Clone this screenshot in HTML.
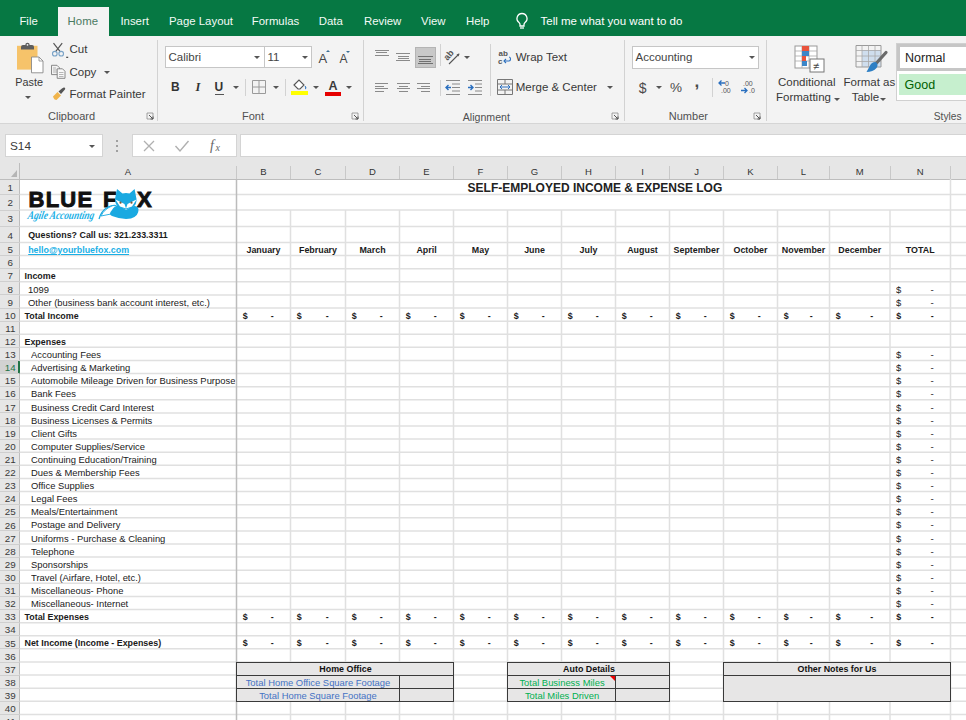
<!DOCTYPE html><html><head><meta charset="utf-8"><style>
*{margin:0;padding:0;box-sizing:border-box}
html,body{width:966px;height:720px;overflow:hidden;background:#fff;font-family:"Liberation Sans",sans-serif}
.t{position:absolute;white-space:nowrap;line-height:1}
.a{position:absolute}
</style></head><body>
<div class="a" style="left:0;top:0;width:966px;height:36px;background:#067843"></div>
<div class="a" style="left:58px;top:7px;width:51px;height:29px;background:#f3f3f3"></div>
<div class="t" style="left:19.40px;top:16.35px;font-size:11.4px;color:#f4fbf6;">File</div>
<div class="t" style="left:67.60px;top:16.35px;font-size:11.4px;color:#4a7a62;">Home</div>
<div class="t" style="left:120.40px;top:16.35px;font-size:11.4px;color:#f4fbf6;">Insert</div>
<div class="t" style="left:169.00px;top:16.35px;font-size:11.4px;color:#f4fbf6;">Page Layout</div>
<div class="t" style="left:251.80px;top:16.35px;font-size:11.4px;color:#f4fbf6;">Formulas</div>
<div class="t" style="left:318.70px;top:16.35px;font-size:11.4px;color:#f4fbf6;">Data</div>
<div class="t" style="left:364.00px;top:16.35px;font-size:11.4px;color:#f4fbf6;">Review</div>
<div class="t" style="left:421.00px;top:16.35px;font-size:11.4px;color:#f4fbf6;">View</div>
<div class="t" style="left:466.00px;top:16.35px;font-size:11.4px;color:#f4fbf6;">Help</div>
<div class="t" style="left:540.50px;top:15.77px;font-size:11.5px;color:#fff;">Tell me what you want to do</div>
<svg class="a" style="left:514px;top:12px" width="16" height="18" viewBox="0 0 16 18"><path d="M8 1.5a5 5 0 0 0-3 9c.6.5 1 1.2 1 2v1.5h4V12.5c0-.8.4-1.5 1-2a5 5 0 0 0-3-9z" fill="none" stroke="#fff" stroke-width="1.3"/><path d="M6 16h4" stroke="#fff" stroke-width="1.3"/></svg>
<div class="a" style="left:0;top:36px;width:966px;height:88px;background:#f3f3f3;border-bottom:1px solid #d5d5d5"></div>
<div class="a" style="left:0;top:124px;width:966px;height:55px;background:#e6e6e6"></div>
<div class="a" style="left:157px;top:40px;width:1px;height:81px;background:#d2d2d2"></div>
<div class="a" style="left:363px;top:40px;width:1px;height:81px;background:#d2d2d2"></div>
<div class="a" style="left:624px;top:40px;width:1px;height:81px;background:#d2d2d2"></div>
<div class="a" style="left:766px;top:40px;width:1px;height:81px;background:#d2d2d2"></div>
<div class="t" style="left:48.00px;top:111.19px;font-size:11px;color:#505050;">Clipboard</div>
<div class="t" style="left:242.00px;top:111.19px;font-size:11px;color:#505050;">Font</div>
<div class="t" style="left:462.80px;top:111.53px;font-size:10.6px;color:#505050;">Alignment</div>
<div class="t" style="left:668.80px;top:111.19px;font-size:11px;color:#505050;">Number</div>
<div class="t" style="left:933.80px;top:111.87px;font-size:10.2px;color:#505050;">Styles</div>
<svg class="a" style="left:146px;top:112px" width="9" height="9" viewBox="0 0 9 9"><path d="M1 1h6v6H1z" fill="none" stroke="#8a8a8a" stroke-width="0.8"/><path d="M3 3l4 4M4.5 7H7V4.5" fill="none" stroke="#555" stroke-width="1"/></svg>
<svg class="a" style="left:351px;top:112px" width="9" height="9" viewBox="0 0 9 9"><path d="M1 1h6v6H1z" fill="none" stroke="#8a8a8a" stroke-width="0.8"/><path d="M3 3l4 4M4.5 7H7V4.5" fill="none" stroke="#555" stroke-width="1"/></svg>
<svg class="a" style="left:611px;top:112px" width="9" height="9" viewBox="0 0 9 9"><path d="M1 1h6v6H1z" fill="none" stroke="#8a8a8a" stroke-width="0.8"/><path d="M3 3l4 4M4.5 7H7V4.5" fill="none" stroke="#555" stroke-width="1"/></svg>
<svg class="a" style="left:753px;top:112px" width="9" height="9" viewBox="0 0 9 9"><path d="M1 1h6v6H1z" fill="none" stroke="#8a8a8a" stroke-width="0.8"/><path d="M3 3l4 4M4.5 7H7V4.5" fill="none" stroke="#555" stroke-width="1"/></svg>
<svg class="a" style="left:0;top:36px" width="160" height="70" viewBox="0 36 160 70">
<rect x="17" y="45.8" width="20.5" height="23.8" fill="#f6c36a"/>
<path d="M21 49.5v-2.5q0-2 2-2h2.3a2.2 2.2 0 0 1 4.4 0H32q2 0 2 2v2.5z" fill="#5e5e5e"/>
<circle cx="27.5" cy="44.8" r="0.9" fill="#f3f3f3"/>
<path d="M31.5 57h7.5l4 4v11.8H31.5z" fill="#fff" stroke="#8a8a8a" stroke-width="0.9"/>
<path d="M39 57v4h4" fill="none" stroke="#8a8a8a" stroke-width="0.8"/>
<path d="M53.5 43.2L60.2 51.6M62.2 43.2L55.6 51.6" stroke="#555" stroke-width="1.2" fill="none"/>
<circle cx="54.8" cy="53.7" r="2.3" fill="none" stroke="#7aa3c7" stroke-width="1.1"/>
<circle cx="61.2" cy="53.7" r="2.3" fill="none" stroke="#7aa3c7" stroke-width="1.1"/>
<path d="M66.2 57.3h2" stroke="#333" stroke-width="1.1"/>
<path d="M51.5 65.3h5.5l2.5 2.5v6.8h-8z" fill="#f3f3f3" stroke="#7d7d7d" stroke-width="0.9"/>
<path d="M53 68h3M53 70h4M53 72h4" stroke="#9a9a9a" stroke-width="0.7"/>
<path d="M57.2 68.8h5.3l2.5 2.5v7h-7.8z" fill="#f8f8f8" stroke="#7d7d7d" stroke-width="0.9"/>
<path d="M59 72.5h4.5M59 74.5h4.5M59 76.5h4.5" stroke="#9a9a9a" stroke-width="0.7"/>
<path d="M53 96.5l4.5-4.5 3.5 3.5-4.5 4.5q-2.5 0-3.5-3.5z" fill="#f0b44c"/>
<path d="M58.5 91.5l4-3.5 2 2-3.5 4z" fill="#555"/><circle cx="64" cy="88.8" r="1.2" fill="#555"/>
</svg>
<div class="t" style="left:15.30px;top:77.16px;font-size:10.8px;color:#383838;">Paste</div>
<div class="a" style="left:25px;top:96px;width:0;height:0;border-left:3px solid transparent;border-right:3px solid transparent;border-top:3px solid #555"></div>
<div class="t" style="left:69.50px;top:44.27px;font-size:11.5px;color:#383838;">Cut</div>
<div class="t" style="left:69.50px;top:67.27px;font-size:11.5px;color:#383838;">Copy</div>
<div class="a" style="left:104px;top:71px;width:0;height:0;border-left:3px solid transparent;border-right:3px solid transparent;border-top:3px solid #555"></div>
<div class="t" style="left:69.50px;top:88.77px;font-size:11.5px;color:#383838;">Format Painter</div>
<div class="a" style="left:165px;top:46px;width:100px;height:22px;background:#fff;border:1px solid #c6c6c6"></div>
<div class="a" style="left:264px;top:46px;width:48px;height:22px;background:#fff;border:1px solid #c6c6c6"></div>
<div class="t" style="left:168.50px;top:51.77px;font-size:11.5px;color:#444;">Calibri</div>
<div class="t" style="left:267.50px;top:51.77px;font-size:11.5px;color:#444;">11</div>
<div class="a" style="left:253.5px;top:56px;width:0;height:0;border-left:3px solid transparent;border-right:3px solid transparent;border-top:3px solid #555"></div>
<div class="a" style="left:302px;top:56px;width:0;height:0;border-left:3px solid transparent;border-right:3px solid transparent;border-top:3px solid #555"></div>
<div class="t" style="left:318.50px;top:52.00px;font-size:13px;color:#444;">A</div>
<div class="t" style="left:339.50px;top:52.84px;font-size:12px;color:#444;">A</div>
<div class="a" style="left:326px;top:50px;width:0;height:0;border-left:2.2px solid transparent;border-right:2.2px solid transparent;border-bottom:2.5px solid #3a6f95"></div>
<div class="a" style="left:346.3px;top:50.5px;width:0;height:0;border-left:2.2px solid transparent;border-right:2.2px solid transparent;border-top:2.5px solid #3a6f95"></div>
<div class="t" style="left:171.00px;top:81.34px;font-size:12px;color:#333;font-weight:bold;">B</div>
<div class="t" style="left:195.50px;top:80.92px;font-size:12.5px;color:#333;font-weight:bold;font-style:italic;font-family:'Liberation Serif',serif;">I</div>
<div class="t" style="left:214.50px;top:81.34px;font-size:12px;color:#333;font-weight:bold;">U</div>
<div class="a" style="left:214.5px;top:93.5px;width:9px;height:1px;background:#555"></div>
<div class="a" style="left:232.5px;top:86px;width:0;height:0;border-left:3px solid transparent;border-right:3px solid transparent;border-top:3px solid #555"></div>
<div class="a" style="left:245px;top:79px;width:1px;height:17px;background:#d2d2d2"></div>
<svg class="a" style="left:252px;top:80px" width="14" height="14" viewBox="0 0 14 14"><path d="M.5.5h13v13H.5zM7 .5v13M.5 7h13" fill="none" stroke="#9a9a9a" stroke-width="1"/></svg>
<div class="a" style="left:272.5px;top:86px;width:0;height:0;border-left:3px solid transparent;border-right:3px solid transparent;border-top:3px solid #555"></div>
<div class="a" style="left:285px;top:79px;width:1px;height:17px;background:#d2d2d2"></div>
<svg class="a" style="left:291px;top:78px" width="17" height="17" viewBox="0 0 17 17"><path d="M3 7l5-5 5 5-4 4H7z" fill="#fff" stroke="#555" stroke-width="1.1"/><path d="M14 8c1 1.5 1.5 2.5 0 3" fill="#3a7cc3" stroke="#3a7cc3"/><rect x="0" y="13" width="17" height="4" fill="#ffff00"/></svg>
<div class="a" style="left:313px;top:86px;width:0;height:0;border-left:3px solid transparent;border-right:3px solid transparent;border-top:3px solid #555"></div>
<div class="t" style="left:33.00px;width:600px;text-align:center;top:79.72px;font-size:12.5px;color:#3a3a3a;font-weight:bold;">A</div>
<div class="a" style="left:325px;top:91.5px;width:16px;height:4px;background:#e60000"></div>
<div class="a" style="left:346px;top:86px;width:0;height:0;border-left:3px solid transparent;border-right:3px solid transparent;border-top:3px solid #555"></div>
<div class="a" style="left:374.5px;top:49.8px;width:14px;height:1px;background:#8a8a8a"></div><div class="a" style="left:376.0px;top:52.0px;width:11px;height:1px;background:#8a8a8a"></div>
<div class="a" style="left:374.5px;top:54.8px;width:14px;height:1px;background:#8a8a8a"></div>
<div class="a" style="left:396px;top:52.8px;width:14px;height:1px;background:#8a8a8a"></div>
<div class="a" style="left:397.5px;top:55.6px;width:11px;height:1px;background:#8a8a8a"></div><div class="a" style="left:397.5px;top:57.7px;width:11px;height:1px;background:#8a8a8a"></div>
<div class="a" style="left:396px;top:59.8px;width:14px;height:1px;background:#8a8a8a"></div>
<div class="a" style="left:414.5px;top:46.5px;width:21px;height:21.5px;background:#c8c8c8;border:1px solid #b4b4b4"></div>
<div class="a" style="left:417.5px;top:56.2px;width:15px;height:1px;background:#707070"></div><div class="a" style="left:419.0px;top:58.6px;width:12px;height:1px;background:#707070"></div><div class="a" style="left:419.0px;top:61.0px;width:12px;height:1px;background:#707070"></div><div class="a" style="left:417.5px;top:63.4px;width:15px;height:1px;background:#707070"></div>
<div class="a" style="left:439.5px;top:44px;width:1px;height:22px;background:#d2d2d2"></div>
<svg class="a" style="left:444px;top:49px" width="18" height="16" viewBox="0 0 18 16"><text x="0" y="0" font-size="9" font-weight="bold" fill="#555" font-family="Liberation Sans" transform="translate(3.5 12) rotate(-50)">ab</text><path d="M5 15L15 5" stroke="#555" stroke-width="1.1" fill="none"/><path d="M15.5 4.5l-1 3-2-2z" fill="#555"/></svg>
<div class="a" style="left:464px;top:56px;width:0;height:0;border-left:3px solid transparent;border-right:3px solid transparent;border-top:3px solid #555"></div>
<div class="a" style="left:375px;top:83.0px;width:13px;height:1px;background:#8a8a8a"></div><div class="a" style="left:375px;top:85.5px;width:9px;height:1px;background:#8a8a8a"></div><div class="a" style="left:375px;top:88.0px;width:13px;height:1px;background:#8a8a8a"></div><div class="a" style="left:375px;top:90.5px;width:9px;height:1px;background:#8a8a8a"></div>
<div class="a" style="left:397px;top:83.0px;width:13px;height:1px;background:#8a8a8a"></div><div class="a" style="left:399px;top:85.5px;width:9px;height:1px;background:#8a8a8a"></div><div class="a" style="left:397px;top:88.0px;width:13px;height:1px;background:#8a8a8a"></div><div class="a" style="left:399px;top:90.5px;width:9px;height:1px;background:#8a8a8a"></div>
<div class="a" style="left:417px;top:83.0px;width:13px;height:1px;background:#8a8a8a"></div><div class="a" style="left:421px;top:85.5px;width:9px;height:1px;background:#8a8a8a"></div><div class="a" style="left:417px;top:88.0px;width:13px;height:1px;background:#8a8a8a"></div><div class="a" style="left:421px;top:90.5px;width:9px;height:1px;background:#8a8a8a"></div>
<div class="a" style="left:439.5px;top:80px;width:1px;height:16px;background:#d2d2d2"></div>
<svg class="a" style="left:445px;top:80px" width="16" height="15" viewBox="0 0 16 15"><path d="M1 .5h14M7 4h8M7 7.5h8M7 11h8M1 14.5h14" stroke="#8a8a8a" stroke-width="1"/><path d="M1 7.5h5M3.5 5L1 7.5 3.5 10" stroke="#2a6fbf" stroke-width="1.4" fill="none"/></svg>
<svg class="a" style="left:467px;top:80px" width="16" height="15" viewBox="0 0 16 15"><path d="M1 .5h14M8 4h7M8 7.5h7M8 11h7M1 14.5h14" stroke="#8a8a8a" stroke-width="1"/><path d="M1 7.5h5M3.5 5L6 7.5 3.5 10" stroke="#2a6fbf" stroke-width="1.4" fill="none"/></svg>
<div class="a" style="left:490px;top:44px;width:1px;height:52px;background:#d2d2d2"></div>
<svg class="a" style="left:497px;top:49px" width="16" height="16" viewBox="0 0 16 16"><text x="1.5" y="7" font-size="8" font-weight="bold" fill="#555" font-family="Liberation Sans">ab</text><text x="1" y="14.5" font-size="8" font-weight="bold" fill="#555" font-family="Liberation Sans">c</text><path d="M7 12h5c2 0 2-4 0-4" stroke="#2a6fbf" stroke-width="1.1" fill="none"/><path d="M9 10l-2 2 2 2" stroke="#2a6fbf" stroke-width="1.1" fill="none"/></svg>
<div class="t" style="left:515.70px;top:51.77px;font-size:11.5px;color:#383838;">Wrap Text</div>
<svg class="a" style="left:497px;top:79px" width="16" height="16" viewBox="0 0 16 16"><path d="M.5.5h15v15H.5zM.5 5h15M.5 11h15M8 .5v4.5M8 11v4.5" fill="none" stroke="#777" stroke-width="1"/><path d="M3 8h10M5 6l-2 2 2 2M11 6l2 2-2 2" fill="none" stroke="#2a6fbf" stroke-width="1"/></svg>
<div class="t" style="left:515.70px;top:81.77px;font-size:11.5px;color:#383838;">Merge &amp; Center</div>
<div class="a" style="left:606.5px;top:86px;width:0;height:0;border-left:3px solid transparent;border-right:3px solid transparent;border-top:3px solid #555"></div>
<div class="a" style="left:632px;top:46px;width:127px;height:22.5px;background:#fff;border:1px solid #c6c6c6"></div>
<div class="t" style="left:635.50px;top:51.77px;font-size:11.5px;color:#444;">Accounting</div>
<div class="a" style="left:748.5px;top:56px;width:0;height:0;border-left:3px solid transparent;border-right:3px solid transparent;border-top:3px solid #555"></div>
<div class="t" style="left:638.80px;top:81.15px;font-size:14px;color:#4a4a4a;">$</div>
<div class="a" style="left:656px;top:86px;width:0;height:0;border-left:3px solid transparent;border-right:3px solid transparent;border-top:3px solid #555"></div>
<div class="t" style="left:670.00px;top:81.37px;font-size:13.5px;color:#4a4a4a;">%</div>
<div class="t" style="left:694.50px;top:73.11px;font-size:17px;color:#4a4a4a;font-weight:bold;">,</div>
<div class="a" style="left:712px;top:78px;width:1px;height:19px;background:#d2d2d2"></div>
<svg class="a" style="left:718px;top:79px" width="16" height="16" viewBox="0 0 16 16"><text x="7" y="7" font-size="7" fill="#555" font-family="Liberation Sans">0</text><text x="3" y="14" font-size="7" fill="#555" font-family="Liberation Sans">.00</text><path d="M1 4h6M3.5 1.5L1 4l2.5 2.5" stroke="#2a6fbf" stroke-width="1.3" fill="none"/></svg>
<svg class="a" style="left:740px;top:79px" width="16" height="16" viewBox="0 0 16 16"><text x="3" y="7" font-size="7" fill="#555" font-family="Liberation Sans">.00</text><text x="9" y="14" font-size="7" fill="#555" font-family="Liberation Sans">.0</text><path d="M1 11.5h6M4.5 9L7 11.5 4.5 14" stroke="#2a6fbf" stroke-width="1.3" fill="none"/></svg>
<svg class="a" style="left:794px;top:45px" width="31" height="28" viewBox="0 0 31 28">
<rect x="1" y="1" width="22" height="22" fill="#fff" stroke="#999" stroke-width="1"/>
<path d="M1 6h22M1 11h22M1 16h22M8 1v22M15 1v22" stroke="#aaa" stroke-width="0.8"/>
<rect x="8" y="1" width="7" height="5" fill="#e8533c"/><rect x="8" y="6" width="7" height="5" fill="#3b86c8"/><rect x="8" y="11" width="4" height="5" fill="#e8533c"/><rect x="8" y="16" width="5" height="5" fill="#3b86c8"/>
<rect x="16" y="14" width="14" height="13" fill="#fff" stroke="#777" stroke-width="1"/>
<text x="19" y="25" font-size="11" fill="#444" font-family="Liberation Sans">&#8800;</text>
</svg>
<div class="t" style="left:778.00px;top:76.77px;font-size:11.5px;color:#383838;">Conditional</div>
<div class="t" style="left:776.00px;top:92.27px;font-size:11.5px;color:#383838;">Formatting</div>
<div class="a" style="left:834px;top:98px;width:0;height:0;border-left:3px solid transparent;border-right:3px solid transparent;border-top:3px solid #555"></div>
<svg class="a" style="left:850px;top:40px" width="40" height="36" viewBox="850 40 40 36">
<rect x="862" y="50" width="19" height="17" fill="#cfdeee"/>
<path d="M856 45.5h25v21.5h-25z" fill="none" stroke="#9a9a9a" stroke-width="1"/>
<path d="M856 50.5h25M856 56h25M856 61.5h25M862 45.5v21.5M868.5 45.5v21.5M875 45.5v21.5" stroke="#a8a8a8" stroke-width="0.8"/>
<path d="M886 52.5L876.5 63" stroke="#6a6a6a" stroke-width="3.2" stroke-linecap="round"/>
<path d="M875.5 62c-3 0-5 2-6 4.5l-3 5.5c4 0 8-1.5 10-4 1.5-2 1.5-4.5-1-6z" fill="#2e7fc4"/>
</svg>
<div class="t" style="left:843.50px;top:76.77px;font-size:11.5px;color:#383838;">Format as</div>
<div class="t" style="left:851.70px;top:92.27px;font-size:11.5px;color:#383838;">Table</div>
<div class="a" style="left:880px;top:98px;width:0;height:0;border-left:3px solid transparent;border-right:3px solid transparent;border-top:3px solid #555"></div>
<div class="a" style="left:896px;top:43px;width:80px;height:58px;background:#fff;border:1px solid #d0d0d0"></div>
<div class="a" style="left:897px;top:44px;width:80px;height:27px;background:#fff;border:3px solid #c6c6c6"></div>
<div class="t" style="left:905.00px;top:51.92px;font-size:12.5px;color:#222;">Normal</div>
<div class="a" style="left:899px;top:73.5px;width:80px;height:21.5px;background:#c6efce"></div>
<div class="t" style="left:904.50px;top:79.42px;font-size:12.5px;color:#006100;">Good</div>
<div class="a" style="left:5px;top:134px;width:98px;height:23px;background:#fff;border:1px solid #d4d4d4"></div>
<div class="t" style="left:10.00px;top:140.61px;font-size:11.8px;color:#3a3a3a;">S14</div>
<div class="a" style="left:89px;top:145px;width:0;height:0;border-left:3px solid transparent;border-right:3px solid transparent;border-top:3px solid #555"></div>
<div class="a" style="left:116px;top:140px;width:2px;height:2px;background:#a0a0a0"></div>
<div class="a" style="left:116px;top:145px;width:2px;height:2px;background:#a0a0a0"></div>
<div class="a" style="left:116px;top:150px;width:2px;height:2px;background:#a0a0a0"></div>
<div class="a" style="left:131.5px;top:134px;width:105px;height:23px;background:#fff;border:1px solid #d4d4d4"></div>
<svg class="a" style="left:142px;top:139px" width="14" height="14" viewBox="0 0 14 14"><path d="M2 2l10 10M12 2L2 12" stroke="#b0b0b0" stroke-width="1.3"/></svg>
<svg class="a" style="left:174px;top:139px" width="16" height="14" viewBox="0 0 16 14"><path d="M1.5 7l4.5 5 8.5-10" stroke="#b0b0b0" stroke-width="1.4" fill="none"/></svg>
<div class="t" style="left:210.00px;top:139.15px;font-size:14px;color:#666;font-style:italic;font-family:'Liberation Serif',serif;">f</div>
<div class="t" style="left:215.50px;top:142.53px;font-size:10px;color:#666;font-style:italic;font-family:'Liberation Serif',serif;">x</div>
<div class="a" style="left:239.5px;top:134px;width:740px;height:23px;background:#fff;border:1px solid #d4d4d4"></div>
<div class="a" style="left:0;top:163px;width:966px;height:16px;background:#e6e6e6"></div>
<div class="a" style="left:0;top:179px;width:19.5px;height:541px;background:#e6e6e6"></div>
<div class="a" style="left:10.5px;top:169.5px;width:0;height:0;border-left:6.5px solid transparent;border-bottom:7px solid #b5b5b5"></div>
<div class="a" style="left:0;top:178.5px;width:966px;height:1px;background:#bdbdbd"></div>
<div class="a" style="left:19px;top:163px;width:1px;height:557px;background:#bdbdbd"></div>
<div class="t" style="left:-172.00px;width:600px;text-align:center;top:167.46px;font-size:9.5px;color:#333;">A</div>
<div class="a" style="left:236.0px;top:166px;width:1px;height:13px;background:#c8c8c8"></div>
<div class="t" style="left:-36.50px;width:600px;text-align:center;top:167.46px;font-size:9.5px;color:#333;">B</div>
<div class="a" style="left:290.0px;top:166px;width:1px;height:13px;background:#c8c8c8"></div>
<div class="t" style="left:18.00px;width:600px;text-align:center;top:167.46px;font-size:9.5px;color:#333;">C</div>
<div class="a" style="left:345.0px;top:166px;width:1px;height:13px;background:#c8c8c8"></div>
<div class="t" style="left:72.50px;width:600px;text-align:center;top:167.46px;font-size:9.5px;color:#333;">D</div>
<div class="a" style="left:399.0px;top:166px;width:1px;height:13px;background:#c8c8c8"></div>
<div class="t" style="left:126.50px;width:600px;text-align:center;top:167.46px;font-size:9.5px;color:#333;">E</div>
<div class="a" style="left:453.0px;top:166px;width:1px;height:13px;background:#c8c8c8"></div>
<div class="t" style="left:180.50px;width:600px;text-align:center;top:167.46px;font-size:9.5px;color:#333;">F</div>
<div class="a" style="left:507.0px;top:166px;width:1px;height:13px;background:#c8c8c8"></div>
<div class="t" style="left:234.50px;width:600px;text-align:center;top:167.46px;font-size:9.5px;color:#333;">G</div>
<div class="a" style="left:561.0px;top:166px;width:1px;height:13px;background:#c8c8c8"></div>
<div class="t" style="left:288.50px;width:600px;text-align:center;top:167.46px;font-size:9.5px;color:#333;">H</div>
<div class="a" style="left:615.0px;top:166px;width:1px;height:13px;background:#c8c8c8"></div>
<div class="t" style="left:342.50px;width:600px;text-align:center;top:167.46px;font-size:9.5px;color:#333;">I</div>
<div class="a" style="left:669.0px;top:166px;width:1px;height:13px;background:#c8c8c8"></div>
<div class="t" style="left:396.50px;width:600px;text-align:center;top:167.46px;font-size:9.5px;color:#333;">J</div>
<div class="a" style="left:723.0px;top:166px;width:1px;height:13px;background:#c8c8c8"></div>
<div class="t" style="left:450.50px;width:600px;text-align:center;top:167.46px;font-size:9.5px;color:#333;">K</div>
<div class="a" style="left:777.0px;top:166px;width:1px;height:13px;background:#c8c8c8"></div>
<div class="t" style="left:503.50px;width:600px;text-align:center;top:167.46px;font-size:9.5px;color:#333;">L</div>
<div class="a" style="left:829.0px;top:166px;width:1px;height:13px;background:#c8c8c8"></div>
<div class="t" style="left:559.75px;width:600px;text-align:center;top:167.46px;font-size:9.5px;color:#333;">M</div>
<div class="a" style="left:889.5px;top:166px;width:1px;height:13px;background:#c8c8c8"></div>
<div class="t" style="left:620.25px;width:600px;text-align:center;top:167.46px;font-size:9.5px;color:#333;">N</div>
<div class="a" style="left:950.0px;top:166px;width:1px;height:13px;background:#c8c8c8"></div>
<div class="t" style="left:-289.70px;width:600px;text-align:center;top:182.90px;font-size:9.8px;color:#3a3a3a;">1</div>
<div class="a" style="left:0;top:193.9px;width:19px;height:1px;background:#cfcfcf"></div>
<div class="t" style="left:-289.70px;width:600px;text-align:center;top:198.40px;font-size:9.8px;color:#3a3a3a;">2</div>
<div class="a" style="left:0;top:209.5px;width:19px;height:1px;background:#cfcfcf"></div>
<div class="t" style="left:-289.70px;width:600px;text-align:center;top:214.45px;font-size:9.8px;color:#3a3a3a;">3</div>
<div class="a" style="left:0;top:226.0px;width:19px;height:1px;background:#cfcfcf"></div>
<div class="t" style="left:-289.70px;width:600px;text-align:center;top:230.70px;font-size:9.8px;color:#3a3a3a;">4</div>
<div class="a" style="left:0;top:242.0px;width:19px;height:1px;background:#cfcfcf"></div>
<div class="t" style="left:-289.70px;width:600px;text-align:center;top:245.26px;font-size:9.8px;color:#3a3a3a;">5</div>
<div class="a" style="left:0;top:255.1px;width:19px;height:1px;background:#cfcfcf"></div>
<div class="t" style="left:-289.70px;width:600px;text-align:center;top:258.37px;font-size:9.8px;color:#3a3a3a;">6</div>
<div class="a" style="left:0;top:268.2px;width:19px;height:1px;background:#cfcfcf"></div>
<div class="t" style="left:-289.70px;width:600px;text-align:center;top:271.47px;font-size:9.8px;color:#3a3a3a;">7</div>
<div class="a" style="left:0;top:281.3px;width:19px;height:1px;background:#cfcfcf"></div>
<div class="t" style="left:-289.70px;width:600px;text-align:center;top:284.58px;font-size:9.8px;color:#3a3a3a;">8</div>
<div class="a" style="left:0;top:294.4px;width:19px;height:1px;background:#cfcfcf"></div>
<div class="t" style="left:-289.70px;width:600px;text-align:center;top:297.69px;font-size:9.8px;color:#3a3a3a;">9</div>
<div class="a" style="left:0;top:307.5px;width:19px;height:1px;background:#cfcfcf"></div>
<div class="t" style="left:-289.70px;width:600px;text-align:center;top:310.80px;font-size:9.8px;color:#3a3a3a;">10</div>
<div class="a" style="left:0;top:320.6px;width:19px;height:1px;background:#cfcfcf"></div>
<div class="t" style="left:-289.70px;width:600px;text-align:center;top:323.91px;font-size:9.8px;color:#3a3a3a;">11</div>
<div class="a" style="left:0;top:333.8px;width:19px;height:1px;background:#cfcfcf"></div>
<div class="t" style="left:-289.70px;width:600px;text-align:center;top:337.01px;font-size:9.8px;color:#3a3a3a;">12</div>
<div class="a" style="left:0;top:346.9px;width:19px;height:1px;background:#cfcfcf"></div>
<div class="t" style="left:-289.70px;width:600px;text-align:center;top:350.12px;font-size:9.8px;color:#3a3a3a;">13</div>
<div class="a" style="left:0;top:360.0px;width:19px;height:1px;background:#cfcfcf"></div>
<div class="a" style="left:0;top:360.5px;width:19px;height:13.1px;background:#d2d2d2"></div>
<div class="a" style="left:17.5px;top:360.5px;width:2px;height:13.1px;background:#217346"></div>
<div class="t" style="left:-289.70px;width:600px;text-align:center;top:363.23px;font-size:9.8px;color:#217346;">14</div>
<div class="a" style="left:0;top:373.1px;width:19px;height:1px;background:#cfcfcf"></div>
<div class="t" style="left:-289.70px;width:600px;text-align:center;top:376.34px;font-size:9.8px;color:#3a3a3a;">15</div>
<div class="a" style="left:0;top:386.2px;width:19px;height:1px;background:#cfcfcf"></div>
<div class="t" style="left:-289.70px;width:600px;text-align:center;top:389.45px;font-size:9.8px;color:#3a3a3a;">16</div>
<div class="a" style="left:0;top:399.3px;width:19px;height:1px;background:#cfcfcf"></div>
<div class="t" style="left:-289.70px;width:600px;text-align:center;top:402.55px;font-size:9.8px;color:#3a3a3a;">17</div>
<div class="a" style="left:0;top:412.4px;width:19px;height:1px;background:#cfcfcf"></div>
<div class="t" style="left:-289.70px;width:600px;text-align:center;top:415.66px;font-size:9.8px;color:#3a3a3a;">18</div>
<div class="a" style="left:0;top:425.5px;width:19px;height:1px;background:#cfcfcf"></div>
<div class="t" style="left:-289.70px;width:600px;text-align:center;top:428.77px;font-size:9.8px;color:#3a3a3a;">19</div>
<div class="a" style="left:0;top:438.6px;width:19px;height:1px;background:#cfcfcf"></div>
<div class="t" style="left:-289.70px;width:600px;text-align:center;top:441.88px;font-size:9.8px;color:#3a3a3a;">20</div>
<div class="a" style="left:0;top:451.7px;width:19px;height:1px;background:#cfcfcf"></div>
<div class="t" style="left:-289.70px;width:600px;text-align:center;top:454.99px;font-size:9.8px;color:#3a3a3a;">21</div>
<div class="a" style="left:0;top:464.8px;width:19px;height:1px;background:#cfcfcf"></div>
<div class="t" style="left:-289.70px;width:600px;text-align:center;top:468.09px;font-size:9.8px;color:#3a3a3a;">22</div>
<div class="a" style="left:0;top:477.9px;width:19px;height:1px;background:#cfcfcf"></div>
<div class="t" style="left:-289.70px;width:600px;text-align:center;top:481.20px;font-size:9.8px;color:#3a3a3a;">23</div>
<div class="a" style="left:0;top:491.1px;width:19px;height:1px;background:#cfcfcf"></div>
<div class="t" style="left:-289.70px;width:600px;text-align:center;top:494.31px;font-size:9.8px;color:#3a3a3a;">24</div>
<div class="a" style="left:0;top:504.2px;width:19px;height:1px;background:#cfcfcf"></div>
<div class="t" style="left:-289.70px;width:600px;text-align:center;top:507.42px;font-size:9.8px;color:#3a3a3a;">25</div>
<div class="a" style="left:0;top:517.3px;width:19px;height:1px;background:#cfcfcf"></div>
<div class="t" style="left:-289.70px;width:600px;text-align:center;top:520.53px;font-size:9.8px;color:#3a3a3a;">26</div>
<div class="a" style="left:0;top:530.4px;width:19px;height:1px;background:#cfcfcf"></div>
<div class="t" style="left:-289.70px;width:600px;text-align:center;top:533.63px;font-size:9.8px;color:#3a3a3a;">27</div>
<div class="a" style="left:0;top:543.5px;width:19px;height:1px;background:#cfcfcf"></div>
<div class="t" style="left:-289.70px;width:600px;text-align:center;top:546.74px;font-size:9.8px;color:#3a3a3a;">28</div>
<div class="a" style="left:0;top:556.6px;width:19px;height:1px;background:#cfcfcf"></div>
<div class="t" style="left:-289.70px;width:600px;text-align:center;top:559.85px;font-size:9.8px;color:#3a3a3a;">29</div>
<div class="a" style="left:0;top:569.7px;width:19px;height:1px;background:#cfcfcf"></div>
<div class="t" style="left:-289.70px;width:600px;text-align:center;top:572.96px;font-size:9.8px;color:#3a3a3a;">30</div>
<div class="a" style="left:0;top:582.8px;width:19px;height:1px;background:#cfcfcf"></div>
<div class="t" style="left:-289.70px;width:600px;text-align:center;top:586.07px;font-size:9.8px;color:#3a3a3a;">31</div>
<div class="a" style="left:0;top:595.9px;width:19px;height:1px;background:#cfcfcf"></div>
<div class="t" style="left:-289.70px;width:600px;text-align:center;top:599.17px;font-size:9.8px;color:#3a3a3a;">32</div>
<div class="a" style="left:0;top:609.0px;width:19px;height:1px;background:#cfcfcf"></div>
<div class="t" style="left:-289.70px;width:600px;text-align:center;top:612.28px;font-size:9.8px;color:#3a3a3a;">33</div>
<div class="a" style="left:0;top:622.1px;width:19px;height:1px;background:#cfcfcf"></div>
<div class="t" style="left:-289.70px;width:600px;text-align:center;top:625.39px;font-size:9.8px;color:#3a3a3a;">34</div>
<div class="a" style="left:0;top:635.2px;width:19px;height:1px;background:#cfcfcf"></div>
<div class="t" style="left:-289.70px;width:600px;text-align:center;top:638.50px;font-size:9.8px;color:#3a3a3a;">35</div>
<div class="a" style="left:0;top:648.3px;width:19px;height:1px;background:#cfcfcf"></div>
<div class="t" style="left:-289.70px;width:600px;text-align:center;top:651.61px;font-size:9.8px;color:#3a3a3a;">36</div>
<div class="a" style="left:0;top:661.5px;width:19px;height:1px;background:#cfcfcf"></div>
<div class="t" style="left:-289.70px;width:600px;text-align:center;top:664.71px;font-size:9.8px;color:#3a3a3a;">37</div>
<div class="a" style="left:0;top:674.6px;width:19px;height:1px;background:#cfcfcf"></div>
<div class="t" style="left:-289.70px;width:600px;text-align:center;top:677.82px;font-size:9.8px;color:#3a3a3a;">38</div>
<div class="a" style="left:0;top:687.7px;width:19px;height:1px;background:#cfcfcf"></div>
<div class="t" style="left:-289.70px;width:600px;text-align:center;top:690.93px;font-size:9.8px;color:#3a3a3a;">39</div>
<div class="a" style="left:0;top:700.8px;width:19px;height:1px;background:#cfcfcf"></div>
<div class="t" style="left:-289.70px;width:600px;text-align:center;top:704.04px;font-size:9.8px;color:#3a3a3a;">40</div>
<div class="a" style="left:0;top:713.9px;width:19px;height:1px;background:#cfcfcf"></div>
<div class="t" style="left:-289.70px;width:600px;text-align:center;top:717.15px;font-size:9.8px;color:#3a3a3a;">41</div>
<div class="a" style="left:0;top:727.0px;width:19px;height:1px;background:#cfcfcf"></div>
<svg class="a" style="left:0;top:0" width="966" height="720" viewBox="0 0 966 720">
<path d="M19.5 194.40H966.0" stroke="#e0e0e0" stroke-width="1.5"/>
<path d="M19.5 210.00H966.0" stroke="#e0e0e0" stroke-width="1.5"/>
<path d="M19.5 226.50H966.0" stroke="#e0e0e0" stroke-width="1.5"/>
<path d="M19.5 242.50H966.0" stroke="#e0e0e0" stroke-width="1.5"/>
<path d="M19.5 255.61H966.0" stroke="#e0e0e0" stroke-width="1.5"/>
<path d="M19.5 268.72H966.0" stroke="#e0e0e0" stroke-width="1.5"/>
<path d="M19.5 281.82H966.0" stroke="#e0e0e0" stroke-width="1.5"/>
<path d="M19.5 294.93H966.0" stroke="#e0e0e0" stroke-width="1.5"/>
<path d="M19.5 308.04H966.0" stroke="#e0e0e0" stroke-width="1.5"/>
<path d="M19.5 321.15H966.0" stroke="#e0e0e0" stroke-width="1.5"/>
<path d="M19.5 334.26H966.0" stroke="#e0e0e0" stroke-width="1.5"/>
<path d="M19.5 347.36H966.0" stroke="#e0e0e0" stroke-width="1.5"/>
<path d="M19.5 360.47H966.0" stroke="#e0e0e0" stroke-width="1.5"/>
<path d="M19.5 373.58H966.0" stroke="#e0e0e0" stroke-width="1.5"/>
<path d="M19.5 386.69H966.0" stroke="#e0e0e0" stroke-width="1.5"/>
<path d="M19.5 399.80H966.0" stroke="#e0e0e0" stroke-width="1.5"/>
<path d="M19.5 412.90H966.0" stroke="#e0e0e0" stroke-width="1.5"/>
<path d="M19.5 426.01H966.0" stroke="#e0e0e0" stroke-width="1.5"/>
<path d="M19.5 439.12H966.0" stroke="#e0e0e0" stroke-width="1.5"/>
<path d="M19.5 452.23H966.0" stroke="#e0e0e0" stroke-width="1.5"/>
<path d="M19.5 465.34H966.0" stroke="#e0e0e0" stroke-width="1.5"/>
<path d="M19.5 478.44H966.0" stroke="#e0e0e0" stroke-width="1.5"/>
<path d="M19.5 491.55H966.0" stroke="#e0e0e0" stroke-width="1.5"/>
<path d="M19.5 504.66H966.0" stroke="#e0e0e0" stroke-width="1.5"/>
<path d="M19.5 517.77H966.0" stroke="#e0e0e0" stroke-width="1.5"/>
<path d="M19.5 530.88H966.0" stroke="#e0e0e0" stroke-width="1.5"/>
<path d="M19.5 543.98H966.0" stroke="#e0e0e0" stroke-width="1.5"/>
<path d="M19.5 557.09H966.0" stroke="#e0e0e0" stroke-width="1.5"/>
<path d="M19.5 570.20H966.0" stroke="#e0e0e0" stroke-width="1.5"/>
<path d="M19.5 583.31H966.0" stroke="#e0e0e0" stroke-width="1.5"/>
<path d="M19.5 596.42H966.0" stroke="#e0e0e0" stroke-width="1.5"/>
<path d="M19.5 609.52H966.0" stroke="#e0e0e0" stroke-width="1.5"/>
<path d="M19.5 622.63H966.0" stroke="#e0e0e0" stroke-width="1.5"/>
<path d="M19.5 635.74H966.0" stroke="#e0e0e0" stroke-width="1.5"/>
<path d="M19.5 648.85H966.0" stroke="#e0e0e0" stroke-width="1.5"/>
<path d="M19.5 661.96H966.0" stroke="#e0e0e0" stroke-width="1.5"/>
<path d="M19.5 675.06H966.0" stroke="#e0e0e0" stroke-width="1.5"/>
<path d="M19.5 688.17H966.0" stroke="#e0e0e0" stroke-width="1.5"/>
<path d="M19.5 701.28H966.0" stroke="#e0e0e0" stroke-width="1.5"/>
<path d="M19.5 714.39H966.0" stroke="#e0e0e0" stroke-width="1.5"/>
<path d="M19.5 727.50H966.0" stroke="#e0e0e0" stroke-width="1.5"/>
<path d="M236.50 179.0V720.0" stroke="#bcbcbc" stroke-width="1.5"/>
<path d="M290.50 210.0V720.0" stroke="#e0e0e0" stroke-width="1.5"/>
<path d="M345.50 210.0V720.0" stroke="#e0e0e0" stroke-width="1.5"/>
<path d="M399.50 210.0V720.0" stroke="#e0e0e0" stroke-width="1.5"/>
<path d="M453.50 210.0V720.0" stroke="#e0e0e0" stroke-width="1.5"/>
<path d="M507.50 210.0V720.0" stroke="#e0e0e0" stroke-width="1.5"/>
<path d="M561.50 210.0V720.0" stroke="#e0e0e0" stroke-width="1.5"/>
<path d="M615.50 210.0V720.0" stroke="#e0e0e0" stroke-width="1.5"/>
<path d="M669.50 210.0V720.0" stroke="#e0e0e0" stroke-width="1.5"/>
<path d="M723.50 210.0V720.0" stroke="#e0e0e0" stroke-width="1.5"/>
<path d="M777.50 210.0V720.0" stroke="#e0e0e0" stroke-width="1.5"/>
<path d="M829.50 210.0V720.0" stroke="#e0e0e0" stroke-width="1.5"/>
<path d="M890.00 210.0V720.0" stroke="#e0e0e0" stroke-width="1.5"/>
<path d="M950.50 179.0V720.0" stroke="#e0e0e0" stroke-width="1.5"/>
</svg>
<div class="t" style="left:467.60px;top:182.44px;font-size:12px;color:#222;font-weight:bold;">SELF-EMPLOYED INCOME &amp; EXPENSE LOG</div>
<div class="t" style="left:28.20px;top:230.87px;font-size:8.9px;color:#1a1a1a;font-weight:bold;">Questions? Call us: 321.233.3311</div>
<div class="t" style="left:28.20px;top:245.97px;font-size:8.9px;color:#1ab0e6;font-weight:bold;text-decoration:underline;">hello@yourbluefox.com</div>
<div class="t" style="left:-36.50px;width:600px;text-align:center;top:245.97px;font-size:8.9px;color:#1a1a1a;font-weight:bold;">January</div>
<div class="t" style="left:18.00px;width:600px;text-align:center;top:245.97px;font-size:8.9px;color:#1a1a1a;font-weight:bold;">February</div>
<div class="t" style="left:72.50px;width:600px;text-align:center;top:245.97px;font-size:8.9px;color:#1a1a1a;font-weight:bold;">March</div>
<div class="t" style="left:126.50px;width:600px;text-align:center;top:245.97px;font-size:8.9px;color:#1a1a1a;font-weight:bold;">April</div>
<div class="t" style="left:180.50px;width:600px;text-align:center;top:245.97px;font-size:8.9px;color:#1a1a1a;font-weight:bold;">May</div>
<div class="t" style="left:234.50px;width:600px;text-align:center;top:245.97px;font-size:8.9px;color:#1a1a1a;font-weight:bold;">June</div>
<div class="t" style="left:288.50px;width:600px;text-align:center;top:245.97px;font-size:8.9px;color:#1a1a1a;font-weight:bold;">July</div>
<div class="t" style="left:342.50px;width:600px;text-align:center;top:245.97px;font-size:8.9px;color:#1a1a1a;font-weight:bold;">August</div>
<div class="t" style="left:396.50px;width:600px;text-align:center;top:245.97px;font-size:8.9px;color:#1a1a1a;font-weight:bold;">September</div>
<div class="t" style="left:450.50px;width:600px;text-align:center;top:245.97px;font-size:8.9px;color:#1a1a1a;font-weight:bold;">October</div>
<div class="t" style="left:503.50px;width:600px;text-align:center;top:245.97px;font-size:8.9px;color:#1a1a1a;font-weight:bold;">November</div>
<div class="t" style="left:559.75px;width:600px;text-align:center;top:245.97px;font-size:8.9px;color:#1a1a1a;font-weight:bold;">December</div>
<div class="t" style="left:620.25px;width:600px;text-align:center;top:245.97px;font-size:8.9px;color:#1a1a1a;font-weight:bold;">TOTAL</div>
<div class="t" style="left:24.50px;top:272.19px;font-size:8.9px;color:#1a1a1a;font-weight:bold;">Income</div>
<div class="t" style="left:28.10px;top:284.54px;font-size:9.8px;color:#1a1a1a;transform:scaleX(0.96);transform-origin:0 0;">1099</div>
<div class="t" style="left:28.10px;top:297.64px;font-size:9.8px;color:#1a1a1a;transform:scaleX(0.96);transform-origin:0 0;">Other (business bank account interest, etc.)</div>
<div class="t" style="left:24.50px;top:311.51px;font-size:8.9px;color:#1a1a1a;font-weight:bold;">Total Income</div>
<div class="t" style="left:24.50px;top:337.73px;font-size:8.9px;color:#1a1a1a;font-weight:bold;">Expenses</div>
<div class="t" style="left:31.00px;top:350.08px;font-size:9.8px;color:#1a1a1a;transform:scaleX(0.96);transform-origin:0 0;">Accounting Fees</div>
<div class="t" style="left:31.00px;top:363.18px;font-size:9.8px;color:#1a1a1a;transform:scaleX(0.96);transform-origin:0 0;">Advertising &amp; Marketing</div>
<div class="t" style="left:31.00px;top:376.29px;font-size:9.8px;color:#1a1a1a;transform:scaleX(0.96);transform-origin:0 0;width:213px;overflow:hidden;">Automobile Mileage Driven for Business Purpose</div>
<div class="t" style="left:31.00px;top:389.40px;font-size:9.8px;color:#1a1a1a;transform:scaleX(0.96);transform-origin:0 0;">Bank Fees</div>
<div class="t" style="left:31.00px;top:402.51px;font-size:9.8px;color:#1a1a1a;transform:scaleX(0.96);transform-origin:0 0;">Business Credit Card Interest</div>
<div class="t" style="left:31.00px;top:415.62px;font-size:9.8px;color:#1a1a1a;transform:scaleX(0.96);transform-origin:0 0;">Business Licenses &amp; Permits</div>
<div class="t" style="left:31.00px;top:428.72px;font-size:9.8px;color:#1a1a1a;transform:scaleX(0.96);transform-origin:0 0;">Client Gifts</div>
<div class="t" style="left:31.00px;top:441.83px;font-size:9.8px;color:#1a1a1a;transform:scaleX(0.96);transform-origin:0 0;">Computer Supplies/Service</div>
<div class="t" style="left:31.00px;top:454.94px;font-size:9.8px;color:#1a1a1a;transform:scaleX(0.96);transform-origin:0 0;">Continuing Education/Training</div>
<div class="t" style="left:31.00px;top:468.05px;font-size:9.8px;color:#1a1a1a;transform:scaleX(0.96);transform-origin:0 0;">Dues &amp; Membership Fees</div>
<div class="t" style="left:31.00px;top:481.16px;font-size:9.8px;color:#1a1a1a;transform:scaleX(0.96);transform-origin:0 0;">Office Supplies</div>
<div class="t" style="left:31.00px;top:494.26px;font-size:9.8px;color:#1a1a1a;transform:scaleX(0.96);transform-origin:0 0;">Legal Fees</div>
<div class="t" style="left:31.00px;top:507.37px;font-size:9.8px;color:#1a1a1a;transform:scaleX(0.96);transform-origin:0 0;">Meals/Entertainment</div>
<div class="t" style="left:31.00px;top:520.48px;font-size:9.8px;color:#1a1a1a;transform:scaleX(0.96);transform-origin:0 0;">Postage and Delivery</div>
<div class="t" style="left:31.00px;top:533.59px;font-size:9.8px;color:#1a1a1a;transform:scaleX(0.96);transform-origin:0 0;">Uniforms - Purchase &amp; Cleaning</div>
<div class="t" style="left:31.00px;top:546.70px;font-size:9.8px;color:#1a1a1a;transform:scaleX(0.96);transform-origin:0 0;">Telephone</div>
<div class="t" style="left:31.00px;top:559.80px;font-size:9.8px;color:#1a1a1a;transform:scaleX(0.96);transform-origin:0 0;">Sponsorships</div>
<div class="t" style="left:31.00px;top:572.91px;font-size:9.8px;color:#1a1a1a;transform:scaleX(0.96);transform-origin:0 0;">Travel (Airfare, Hotel, etc.)</div>
<div class="t" style="left:31.00px;top:586.02px;font-size:9.8px;color:#1a1a1a;transform:scaleX(0.96);transform-origin:0 0;">Miscellaneous- Phone</div>
<div class="t" style="left:31.00px;top:599.13px;font-size:9.8px;color:#1a1a1a;transform:scaleX(0.96);transform-origin:0 0;">Miscellaneous- Internet</div>
<div class="t" style="left:24.50px;top:613.00px;font-size:8.9px;color:#1a1a1a;font-weight:bold;">Total Expenses</div>
<div class="t" style="left:24.50px;top:639.21px;font-size:8.9px;color:#1a1a1a;font-weight:bold;">Net Income (Income - Expenses)</div>
<div class="t" style="left:242.80px;top:311.51px;font-size:8.9px;color:#1a1a1a;font-weight:bold;">$</div>
<div class="t" style="right:692.20px;text-align:right;top:311.51px;font-size:8.9px;color:#1a1a1a;font-weight:bold;">-</div>
<div class="t" style="left:296.80px;top:311.51px;font-size:8.9px;color:#1a1a1a;font-weight:bold;">$</div>
<div class="t" style="right:637.20px;text-align:right;top:311.51px;font-size:8.9px;color:#1a1a1a;font-weight:bold;">-</div>
<div class="t" style="left:351.80px;top:311.51px;font-size:8.9px;color:#1a1a1a;font-weight:bold;">$</div>
<div class="t" style="right:583.20px;text-align:right;top:311.51px;font-size:8.9px;color:#1a1a1a;font-weight:bold;">-</div>
<div class="t" style="left:405.80px;top:311.51px;font-size:8.9px;color:#1a1a1a;font-weight:bold;">$</div>
<div class="t" style="right:529.20px;text-align:right;top:311.51px;font-size:8.9px;color:#1a1a1a;font-weight:bold;">-</div>
<div class="t" style="left:459.80px;top:311.51px;font-size:8.9px;color:#1a1a1a;font-weight:bold;">$</div>
<div class="t" style="right:475.20px;text-align:right;top:311.51px;font-size:8.9px;color:#1a1a1a;font-weight:bold;">-</div>
<div class="t" style="left:513.80px;top:311.51px;font-size:8.9px;color:#1a1a1a;font-weight:bold;">$</div>
<div class="t" style="right:421.20px;text-align:right;top:311.51px;font-size:8.9px;color:#1a1a1a;font-weight:bold;">-</div>
<div class="t" style="left:567.80px;top:311.51px;font-size:8.9px;color:#1a1a1a;font-weight:bold;">$</div>
<div class="t" style="right:367.20px;text-align:right;top:311.51px;font-size:8.9px;color:#1a1a1a;font-weight:bold;">-</div>
<div class="t" style="left:621.80px;top:311.51px;font-size:8.9px;color:#1a1a1a;font-weight:bold;">$</div>
<div class="t" style="right:313.20px;text-align:right;top:311.51px;font-size:8.9px;color:#1a1a1a;font-weight:bold;">-</div>
<div class="t" style="left:675.80px;top:311.51px;font-size:8.9px;color:#1a1a1a;font-weight:bold;">$</div>
<div class="t" style="right:259.20px;text-align:right;top:311.51px;font-size:8.9px;color:#1a1a1a;font-weight:bold;">-</div>
<div class="t" style="left:729.80px;top:311.51px;font-size:8.9px;color:#1a1a1a;font-weight:bold;">$</div>
<div class="t" style="right:205.20px;text-align:right;top:311.51px;font-size:8.9px;color:#1a1a1a;font-weight:bold;">-</div>
<div class="t" style="left:783.80px;top:311.51px;font-size:8.9px;color:#1a1a1a;font-weight:bold;">$</div>
<div class="t" style="right:153.20px;text-align:right;top:311.51px;font-size:8.9px;color:#1a1a1a;font-weight:bold;">-</div>
<div class="t" style="left:835.80px;top:311.51px;font-size:8.9px;color:#1a1a1a;font-weight:bold;">$</div>
<div class="t" style="right:92.70px;text-align:right;top:311.51px;font-size:8.9px;color:#1a1a1a;font-weight:bold;">-</div>
<div class="t" style="left:896.30px;top:311.51px;font-size:8.9px;color:#1a1a1a;font-weight:bold;">$</div>
<div class="t" style="right:32.20px;text-align:right;top:311.51px;font-size:8.9px;color:#1a1a1a;font-weight:bold;">-</div>
<div class="t" style="left:242.80px;top:613.00px;font-size:8.9px;color:#1a1a1a;font-weight:bold;">$</div>
<div class="t" style="right:692.20px;text-align:right;top:613.00px;font-size:8.9px;color:#1a1a1a;font-weight:bold;">-</div>
<div class="t" style="left:296.80px;top:613.00px;font-size:8.9px;color:#1a1a1a;font-weight:bold;">$</div>
<div class="t" style="right:637.20px;text-align:right;top:613.00px;font-size:8.9px;color:#1a1a1a;font-weight:bold;">-</div>
<div class="t" style="left:351.80px;top:613.00px;font-size:8.9px;color:#1a1a1a;font-weight:bold;">$</div>
<div class="t" style="right:583.20px;text-align:right;top:613.00px;font-size:8.9px;color:#1a1a1a;font-weight:bold;">-</div>
<div class="t" style="left:405.80px;top:613.00px;font-size:8.9px;color:#1a1a1a;font-weight:bold;">$</div>
<div class="t" style="right:529.20px;text-align:right;top:613.00px;font-size:8.9px;color:#1a1a1a;font-weight:bold;">-</div>
<div class="t" style="left:459.80px;top:613.00px;font-size:8.9px;color:#1a1a1a;font-weight:bold;">$</div>
<div class="t" style="right:475.20px;text-align:right;top:613.00px;font-size:8.9px;color:#1a1a1a;font-weight:bold;">-</div>
<div class="t" style="left:513.80px;top:613.00px;font-size:8.9px;color:#1a1a1a;font-weight:bold;">$</div>
<div class="t" style="right:421.20px;text-align:right;top:613.00px;font-size:8.9px;color:#1a1a1a;font-weight:bold;">-</div>
<div class="t" style="left:567.80px;top:613.00px;font-size:8.9px;color:#1a1a1a;font-weight:bold;">$</div>
<div class="t" style="right:367.20px;text-align:right;top:613.00px;font-size:8.9px;color:#1a1a1a;font-weight:bold;">-</div>
<div class="t" style="left:621.80px;top:613.00px;font-size:8.9px;color:#1a1a1a;font-weight:bold;">$</div>
<div class="t" style="right:313.20px;text-align:right;top:613.00px;font-size:8.9px;color:#1a1a1a;font-weight:bold;">-</div>
<div class="t" style="left:675.80px;top:613.00px;font-size:8.9px;color:#1a1a1a;font-weight:bold;">$</div>
<div class="t" style="right:259.20px;text-align:right;top:613.00px;font-size:8.9px;color:#1a1a1a;font-weight:bold;">-</div>
<div class="t" style="left:729.80px;top:613.00px;font-size:8.9px;color:#1a1a1a;font-weight:bold;">$</div>
<div class="t" style="right:205.20px;text-align:right;top:613.00px;font-size:8.9px;color:#1a1a1a;font-weight:bold;">-</div>
<div class="t" style="left:783.80px;top:613.00px;font-size:8.9px;color:#1a1a1a;font-weight:bold;">$</div>
<div class="t" style="right:153.20px;text-align:right;top:613.00px;font-size:8.9px;color:#1a1a1a;font-weight:bold;">-</div>
<div class="t" style="left:835.80px;top:613.00px;font-size:8.9px;color:#1a1a1a;font-weight:bold;">$</div>
<div class="t" style="right:92.70px;text-align:right;top:613.00px;font-size:8.9px;color:#1a1a1a;font-weight:bold;">-</div>
<div class="t" style="left:896.30px;top:613.00px;font-size:8.9px;color:#1a1a1a;font-weight:bold;">$</div>
<div class="t" style="right:32.20px;text-align:right;top:613.00px;font-size:8.9px;color:#1a1a1a;font-weight:bold;">-</div>
<div class="t" style="left:242.80px;top:639.21px;font-size:8.9px;color:#1a1a1a;font-weight:bold;">$</div>
<div class="t" style="right:692.20px;text-align:right;top:639.21px;font-size:8.9px;color:#1a1a1a;font-weight:bold;">-</div>
<div class="t" style="left:296.80px;top:639.21px;font-size:8.9px;color:#1a1a1a;font-weight:bold;">$</div>
<div class="t" style="right:637.20px;text-align:right;top:639.21px;font-size:8.9px;color:#1a1a1a;font-weight:bold;">-</div>
<div class="t" style="left:351.80px;top:639.21px;font-size:8.9px;color:#1a1a1a;font-weight:bold;">$</div>
<div class="t" style="right:583.20px;text-align:right;top:639.21px;font-size:8.9px;color:#1a1a1a;font-weight:bold;">-</div>
<div class="t" style="left:405.80px;top:639.21px;font-size:8.9px;color:#1a1a1a;font-weight:bold;">$</div>
<div class="t" style="right:529.20px;text-align:right;top:639.21px;font-size:8.9px;color:#1a1a1a;font-weight:bold;">-</div>
<div class="t" style="left:459.80px;top:639.21px;font-size:8.9px;color:#1a1a1a;font-weight:bold;">$</div>
<div class="t" style="right:475.20px;text-align:right;top:639.21px;font-size:8.9px;color:#1a1a1a;font-weight:bold;">-</div>
<div class="t" style="left:513.80px;top:639.21px;font-size:8.9px;color:#1a1a1a;font-weight:bold;">$</div>
<div class="t" style="right:421.20px;text-align:right;top:639.21px;font-size:8.9px;color:#1a1a1a;font-weight:bold;">-</div>
<div class="t" style="left:567.80px;top:639.21px;font-size:8.9px;color:#1a1a1a;font-weight:bold;">$</div>
<div class="t" style="right:367.20px;text-align:right;top:639.21px;font-size:8.9px;color:#1a1a1a;font-weight:bold;">-</div>
<div class="t" style="left:621.80px;top:639.21px;font-size:8.9px;color:#1a1a1a;font-weight:bold;">$</div>
<div class="t" style="right:313.20px;text-align:right;top:639.21px;font-size:8.9px;color:#1a1a1a;font-weight:bold;">-</div>
<div class="t" style="left:675.80px;top:639.21px;font-size:8.9px;color:#1a1a1a;font-weight:bold;">$</div>
<div class="t" style="right:259.20px;text-align:right;top:639.21px;font-size:8.9px;color:#1a1a1a;font-weight:bold;">-</div>
<div class="t" style="left:729.80px;top:639.21px;font-size:8.9px;color:#1a1a1a;font-weight:bold;">$</div>
<div class="t" style="right:205.20px;text-align:right;top:639.21px;font-size:8.9px;color:#1a1a1a;font-weight:bold;">-</div>
<div class="t" style="left:783.80px;top:639.21px;font-size:8.9px;color:#1a1a1a;font-weight:bold;">$</div>
<div class="t" style="right:153.20px;text-align:right;top:639.21px;font-size:8.9px;color:#1a1a1a;font-weight:bold;">-</div>
<div class="t" style="left:835.80px;top:639.21px;font-size:8.9px;color:#1a1a1a;font-weight:bold;">$</div>
<div class="t" style="right:92.70px;text-align:right;top:639.21px;font-size:8.9px;color:#1a1a1a;font-weight:bold;">-</div>
<div class="t" style="left:896.30px;top:639.21px;font-size:8.9px;color:#1a1a1a;font-weight:bold;">$</div>
<div class="t" style="right:32.20px;text-align:right;top:639.21px;font-size:8.9px;color:#1a1a1a;font-weight:bold;">-</div>
<div class="t" style="left:896.30px;top:284.54px;font-size:9.8px;color:#1a1a1a;transform:scaleX(0.96);transform-origin:0 0;">$</div>
<div class="t" style="right:32.20px;text-align:right;top:284.54px;font-size:9.8px;color:#1a1a1a;">-</div>
<div class="t" style="left:896.30px;top:297.64px;font-size:9.8px;color:#1a1a1a;transform:scaleX(0.96);transform-origin:0 0;">$</div>
<div class="t" style="right:32.20px;text-align:right;top:297.64px;font-size:9.8px;color:#1a1a1a;">-</div>
<div class="t" style="left:896.30px;top:350.08px;font-size:9.8px;color:#1a1a1a;transform:scaleX(0.96);transform-origin:0 0;">$</div>
<div class="t" style="right:32.20px;text-align:right;top:350.08px;font-size:9.8px;color:#1a1a1a;">-</div>
<div class="t" style="left:896.30px;top:363.18px;font-size:9.8px;color:#1a1a1a;transform:scaleX(0.96);transform-origin:0 0;">$</div>
<div class="t" style="right:32.20px;text-align:right;top:363.18px;font-size:9.8px;color:#1a1a1a;">-</div>
<div class="t" style="left:896.30px;top:376.29px;font-size:9.8px;color:#1a1a1a;transform:scaleX(0.96);transform-origin:0 0;">$</div>
<div class="t" style="right:32.20px;text-align:right;top:376.29px;font-size:9.8px;color:#1a1a1a;">-</div>
<div class="t" style="left:896.30px;top:389.40px;font-size:9.8px;color:#1a1a1a;transform:scaleX(0.96);transform-origin:0 0;">$</div>
<div class="t" style="right:32.20px;text-align:right;top:389.40px;font-size:9.8px;color:#1a1a1a;">-</div>
<div class="t" style="left:896.30px;top:402.51px;font-size:9.8px;color:#1a1a1a;transform:scaleX(0.96);transform-origin:0 0;">$</div>
<div class="t" style="right:32.20px;text-align:right;top:402.51px;font-size:9.8px;color:#1a1a1a;">-</div>
<div class="t" style="left:896.30px;top:415.62px;font-size:9.8px;color:#1a1a1a;transform:scaleX(0.96);transform-origin:0 0;">$</div>
<div class="t" style="right:32.20px;text-align:right;top:415.62px;font-size:9.8px;color:#1a1a1a;">-</div>
<div class="t" style="left:896.30px;top:428.72px;font-size:9.8px;color:#1a1a1a;transform:scaleX(0.96);transform-origin:0 0;">$</div>
<div class="t" style="right:32.20px;text-align:right;top:428.72px;font-size:9.8px;color:#1a1a1a;">-</div>
<div class="t" style="left:896.30px;top:441.83px;font-size:9.8px;color:#1a1a1a;transform:scaleX(0.96);transform-origin:0 0;">$</div>
<div class="t" style="right:32.20px;text-align:right;top:441.83px;font-size:9.8px;color:#1a1a1a;">-</div>
<div class="t" style="left:896.30px;top:454.94px;font-size:9.8px;color:#1a1a1a;transform:scaleX(0.96);transform-origin:0 0;">$</div>
<div class="t" style="right:32.20px;text-align:right;top:454.94px;font-size:9.8px;color:#1a1a1a;">-</div>
<div class="t" style="left:896.30px;top:468.05px;font-size:9.8px;color:#1a1a1a;transform:scaleX(0.96);transform-origin:0 0;">$</div>
<div class="t" style="right:32.20px;text-align:right;top:468.05px;font-size:9.8px;color:#1a1a1a;">-</div>
<div class="t" style="left:896.30px;top:481.16px;font-size:9.8px;color:#1a1a1a;transform:scaleX(0.96);transform-origin:0 0;">$</div>
<div class="t" style="right:32.20px;text-align:right;top:481.16px;font-size:9.8px;color:#1a1a1a;">-</div>
<div class="t" style="left:896.30px;top:494.26px;font-size:9.8px;color:#1a1a1a;transform:scaleX(0.96);transform-origin:0 0;">$</div>
<div class="t" style="right:32.20px;text-align:right;top:494.26px;font-size:9.8px;color:#1a1a1a;">-</div>
<div class="t" style="left:896.30px;top:507.37px;font-size:9.8px;color:#1a1a1a;transform:scaleX(0.96);transform-origin:0 0;">$</div>
<div class="t" style="right:32.20px;text-align:right;top:507.37px;font-size:9.8px;color:#1a1a1a;">-</div>
<div class="t" style="left:896.30px;top:520.48px;font-size:9.8px;color:#1a1a1a;transform:scaleX(0.96);transform-origin:0 0;">$</div>
<div class="t" style="right:32.20px;text-align:right;top:520.48px;font-size:9.8px;color:#1a1a1a;">-</div>
<div class="t" style="left:896.30px;top:533.59px;font-size:9.8px;color:#1a1a1a;transform:scaleX(0.96);transform-origin:0 0;">$</div>
<div class="t" style="right:32.20px;text-align:right;top:533.59px;font-size:9.8px;color:#1a1a1a;">-</div>
<div class="t" style="left:896.30px;top:546.70px;font-size:9.8px;color:#1a1a1a;transform:scaleX(0.96);transform-origin:0 0;">$</div>
<div class="t" style="right:32.20px;text-align:right;top:546.70px;font-size:9.8px;color:#1a1a1a;">-</div>
<div class="t" style="left:896.30px;top:559.80px;font-size:9.8px;color:#1a1a1a;transform:scaleX(0.96);transform-origin:0 0;">$</div>
<div class="t" style="right:32.20px;text-align:right;top:559.80px;font-size:9.8px;color:#1a1a1a;">-</div>
<div class="t" style="left:896.30px;top:572.91px;font-size:9.8px;color:#1a1a1a;transform:scaleX(0.96);transform-origin:0 0;">$</div>
<div class="t" style="right:32.20px;text-align:right;top:572.91px;font-size:9.8px;color:#1a1a1a;">-</div>
<div class="t" style="left:896.30px;top:586.02px;font-size:9.8px;color:#1a1a1a;transform:scaleX(0.96);transform-origin:0 0;">$</div>
<div class="t" style="right:32.20px;text-align:right;top:586.02px;font-size:9.8px;color:#1a1a1a;">-</div>
<div class="t" style="left:896.30px;top:599.13px;font-size:9.8px;color:#1a1a1a;transform:scaleX(0.96);transform-origin:0 0;">$</div>
<div class="t" style="right:32.20px;text-align:right;top:599.13px;font-size:9.8px;color:#1a1a1a;">-</div>
<div class="t" style="left:28.60px;top:188.98px;font-size:22px;color:#111;font-weight:bold;letter-spacing:1.2px;-webkit-text-stroke:0.9px #111;">BLUE</div>
<div class="t" style="left:103.00px;top:188.98px;font-size:22px;color:#111;font-weight:bold;-webkit-text-stroke:0.9px #111;">F</div>
<div class="t" style="left:137.00px;top:188.98px;font-size:22px;color:#111;font-weight:bold;-webkit-text-stroke:0.9px #111;">X</div>
<div class="t" style="left:29.30px;top:210.38px;font-size:11.6px;color:#1ab0e6;font-weight:bold;font-style:italic;font-family:'Liberation Serif',serif;transform:scaleX(0.8) skewX(-14deg);transform-origin:0 0;">Agile Accounting</div>
<svg class="a" style="left:95px;top:185px" width="48" height="37" viewBox="95 185 48 37">
<path d="M99 219 Q101 211 108 207 Q112 205 116 205.5" fill="none" stroke="#19a9e1" stroke-width="1.2"/>
<path d="M101 216 Q104 209 113 205.5 L118 206 L115 208 L118 209.5 L114 211 L116 212.5 L111 214 Z" fill="#fff" stroke="#19a9e1" stroke-width="0.9"/>
<path d="M112 210 Q115 205 120 206 L126 210 L132 206.5 Q137 205 138.5 209 Q139 216 131 218.5 Q122 220 112 216 Q108 214 112 210 Z" fill="#19a9e1"/>
<path d="M115 199 L117 189 L122.5 193.5 Q126 192.5 129.5 193.5 L134.6 189 L136.5 199 Q137 204 133 207 L126 209.5 L119 207 Q114.5 204 115 199 Z" fill="#19a9e1"/>
<path d="M115.5 199.5 L124.5 204 L126 208.5 L120 206.5 Z" fill="#fff"/>
<path d="M136.5 199.5 L127.5 204 L126 208.5 L132 206.5 Z" fill="#fff"/>
<circle cx="120.5" cy="202.7" r="1.1" fill="#7a5a3a"/><circle cx="131.5" cy="202.7" r="1.1" fill="#7a5a3a"/>
</svg>
<div class="a" style="left:236.2px;top:662.2px;width:217.6px;height:39.8px;background:#e7e6e6;border:1.3px solid #3a3a3a"></div>
<div class="a" style="left:236.2px;top:675px;width:217.6px;height:1.3px;background:#3a3a3a"></div>
<div class="a" style="left:236.2px;top:688px;width:217.6px;height:1.3px;background:#3a3a3a"></div>
<div class="a" style="left:399px;top:675px;width:1.3px;height:27px;background:#3a3a3a"></div>
<div class="t" style="left:45.50px;width:600px;text-align:center;top:665.43px;font-size:8.9px;color:#111;font-weight:bold;">Home Office</div>
<div class="t" style="left:18.00px;width:600px;text-align:center;top:677.78px;font-size:9.8px;color:#4472c4;transform:scaleX(0.96);transform-origin:50% 0;">Total Home Office Square Footage</div>
<div class="t" style="left:18.00px;width:600px;text-align:center;top:690.88px;font-size:9.8px;color:#4472c4;transform:scaleX(0.96);transform-origin:50% 0;">Total Home Square Footage</div>
<div class="a" style="left:507.2px;top:662.2px;width:163.0px;height:39.8px;background:#e7e6e6;border:1.3px solid #3a3a3a"></div>
<div class="a" style="left:507.2px;top:675px;width:163px;height:1.3px;background:#3a3a3a"></div>
<div class="a" style="left:507.2px;top:688px;width:163px;height:1.3px;background:#3a3a3a"></div>
<div class="a" style="left:615px;top:675px;width:1.3px;height:27px;background:#3a3a3a"></div>
<div class="a" style="left:610px;top:676px;width:0;height:0;border-left:5px solid transparent;border-top:5px solid #e00"></div>
<div class="t" style="left:289.00px;width:600px;text-align:center;top:665.43px;font-size:8.9px;color:#111;font-weight:bold;">Auto Details</div>
<div class="t" style="left:261.60px;width:600px;text-align:center;top:677.78px;font-size:9.8px;color:#00b050;transform:scaleX(0.96);transform-origin:50% 0;">Total Business Miles</div>
<div class="t" style="left:261.60px;width:600px;text-align:center;top:690.88px;font-size:9.8px;color:#00b050;transform:scaleX(0.96);transform-origin:50% 0;">Total Miles Driven</div>
<div class="a" style="left:723.2px;top:662.2px;width:227.6px;height:39.8px;background:#e7e6e6;border:1.3px solid #3a3a3a"></div>
<div class="a" style="left:723.2px;top:675px;width:227.6px;height:1.3px;background:#3a3a3a"></div>
<div class="t" style="left:537.00px;width:600px;text-align:center;top:665.43px;font-size:8.9px;color:#111;font-weight:bold;">Other Notes for Us</div>
</body></html>
